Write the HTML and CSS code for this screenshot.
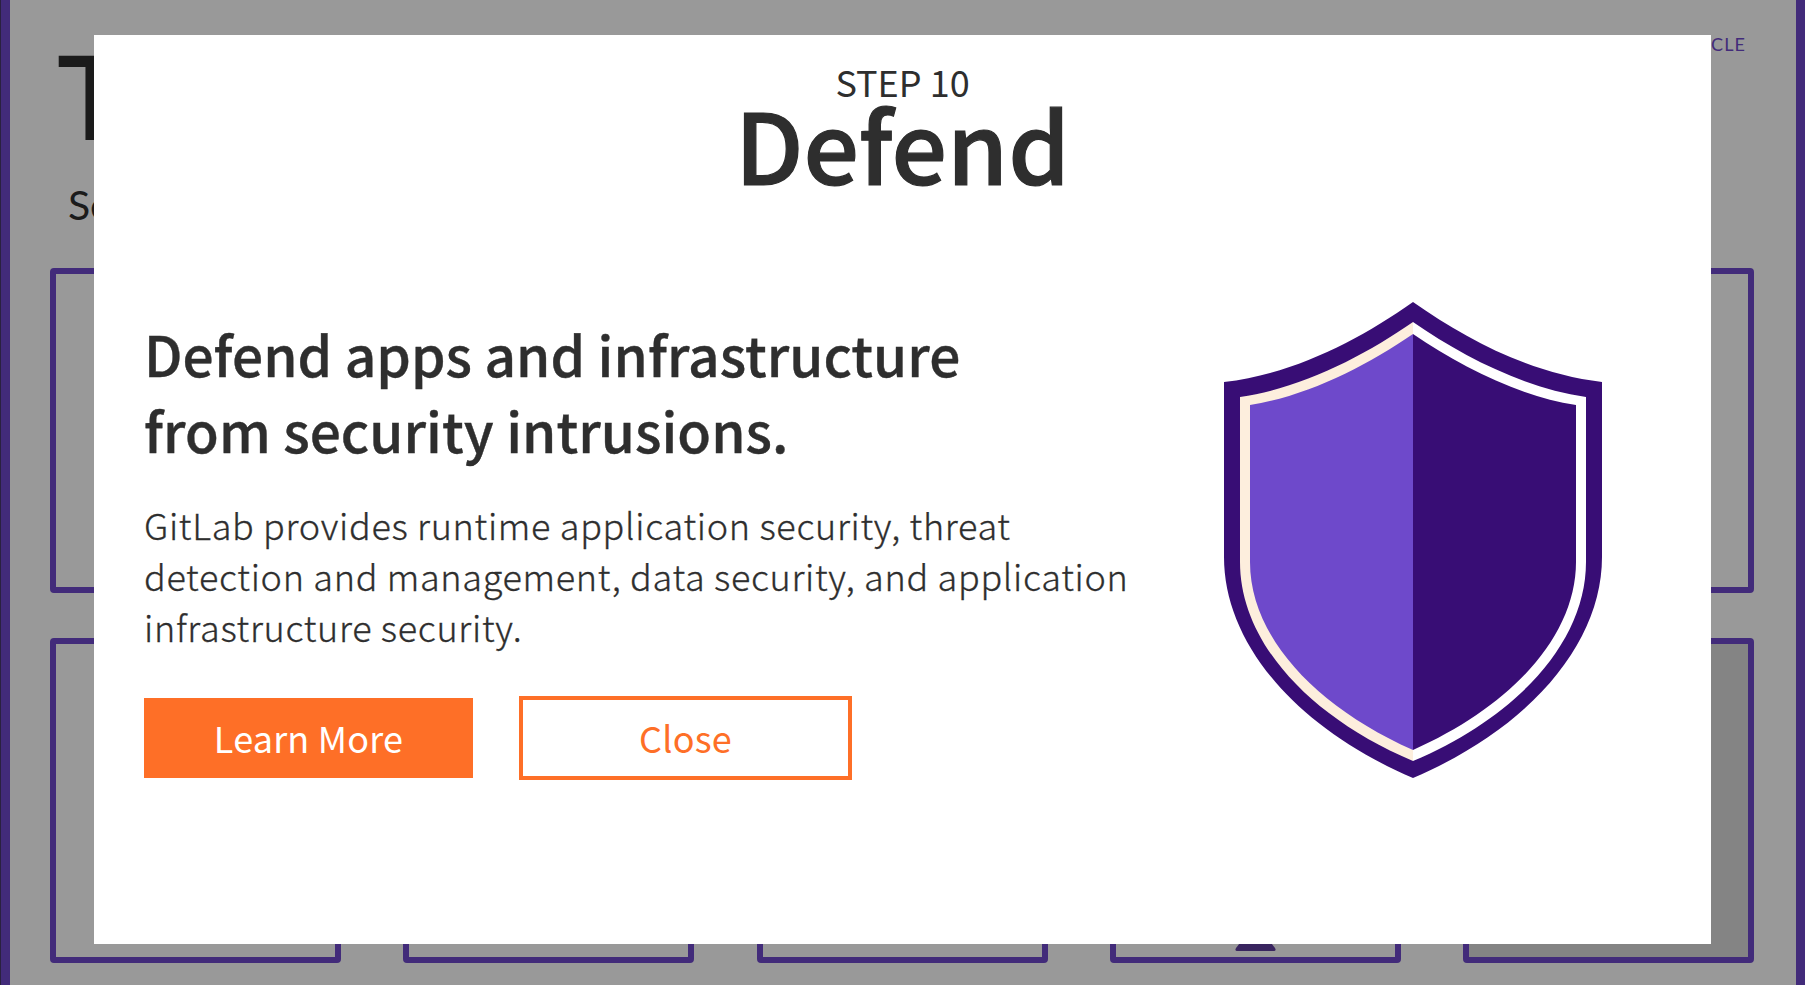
FILE: index.html
```html
<!DOCTYPE html>
<html lang="en">
<head>
	<meta charset="UTF-8">
	<meta name="viewport" content="width=device-width, initial-scale=1">
	<title>DevOps Lifecycle</title>
	<link rel="stylesheet" href="styles.css">
</head>
<body>
	<div class="page">
		<header class="page-top">
			<h1>The DevOps Lifecycle</h1>
			<a class="top-link" href="#">VIEW THE FULL LIFECYCLE</a>
		</header>
		<p class="page-sub">Select a step to learn more</p>

		<div class="steps">
			<div class="step"></div>
			<div class="step"></div>
			<div class="step"></div>
			<div class="step"></div>
			<div class="step"></div>
			<div class="step"></div>
			<div class="step"></div>
			<div class="step"></div>
			<div class="step">
				<svg class="step-icon" viewBox="0 0 41 28" width="41" height="28">
					<path d="M20.5 0L40 25q1.5 3-1 3H2q-2.500 0-1-3z"/>
				</svg>
			</div>
			<div class="step step-active"></div>
		</div>
	</div>

	<div class="overlay">
		<div class="modal">
			<div class="modal-head">
				<div class="step-no">STEP 10</div>
				<h2>Defend</h2>
			</div>

			<div class="modal-body">
				<div class="modal-text">
					<h3>Defend apps and infrastructure<br>from security intrusions.</h3>
					<p>GitLab provides runtime application security, threat detection and management, data security, and application infrastructure security.</p>
					<div class="buttons">
						<a class="btn btn-fill" href="#">Learn More</a>
						<a class="btn btn-line" href="#">Close</a>
					</div>
				</div>

				<svg class="shield" viewBox="0 0 378 476" width="378" height="476">
					<path fill="#380d75" d="M189 0C135 38 70 72 0 80V255C0 340 70 425 189 476C308 425 378 340 378 255V80C308 72 243 38 189 0z"/>
					<path fill="#fdeedd" d="M189 20C140 54 78 86 16 95V260C16 340 85 415 189 459z"/>
					<path fill="#fff" d="M189 20C238 54 300 86 362 95V260C362 340 293 415 189 459z"/>
					<path fill="#6e49cb" d="M189 32C142 64 84 94 26 103V260C26 335 92 405 189 448z"/>
					<path fill="#380d75" d="M189 32C236 64 294 94 352 103V260C352 335 286 405 189 448z"/>
				</svg>
			</div>
		</div>
	</div>
</body>
</html>
```

FILE: styles.css
```css
* {
	box-sizing: border-box;
	margin: 0;
	padding: 0;
}

html,
body {
	height: 100%;
	overflow: hidden;
}

body {
	font-family: "Lato", sans-serif;
	background: #fff;
	color: #2e2e2e;
	border-left: 1px solid #46376b;
}

.page {
	height: 100%;
	padding: 29px 42px 22px 40px;
	border-left: 9px solid #6e49cb;
	border-right: 9px solid #6e49cb;
	display: flex;
	flex-direction: column;
}

.page-top {
	display: flex;
	justify-content: space-between;
	align-items: flex-start;
	padding-left: 8px;
	white-space: nowrap;
}

h1 {
	font-size: 115px;
	font-weight: 400;
	line-height: 130px;
	-webkit-text-stroke: 2px #2e2e2e;
}

.top-link {
	font-size: 18px;
	line-height: 22px;
	letter-spacing: 1.1px;
	color: #6e49cb;
	text-decoration: none;
	margin-top: 4px;
	margin-right: 8px;
}

.page-sub {
	font-size: 41px;
	line-height: 50px;
	padding-left: 18px;
	margin-top: 21px;
}

.steps {
	flex: 1;
	display: grid;
	grid-template-columns: repeat(5, 291px);
	grid-template-rows: repeat(2, 325px);
	justify-content: space-between;
	row-gap: 45px;
	margin-top: 38px;
}

.step {
	border: 6px solid #6e49cb;
	border-radius: 4px;
	display: flex;
	flex-direction: column;
	justify-content: flex-end;
	align-items: center;
	padding-bottom: 6px;
}

.step-active {
	background: #dcdcdc;
}

.step-icon {
	fill: #603e9f;
}

.overlay {
	position: fixed;
	inset: 0;
	background: rgba(0,0,0,0.4);
	display: flex;
	padding: 35px 94px 41px;
}

.modal {
	flex: 1;
	background: #fff;
	font-family: "Noto Sans CJK SC", "Noto Sans", sans-serif;
	color: #2e2e2e;
	padding: 26px 109px 0 50px;
}

.modal-head {
	text-align: center;
	margin-left: 59px;
}

.step-no {
	font-size: 36px;
	line-height: 40px;
}

h2 {
	font-size: 98px;
	font-weight: 500;
	line-height: 82px;
	-webkit-text-stroke: 1.2px #2e2e2e;
}

.modal-body {
	display: flex;
	justify-content: space-between;
	align-items: flex-start;
	margin-top: 119px;
}

.modal-text {
	padding-top: 13px;
}

h3 {
	font-size: 55px;
	font-weight: 500;
	line-height: 76px;
	letter-spacing: 0.05px;
	-webkit-text-stroke: 0.4px #2e2e2e;
}

.modal-text p {
	font-size: 36px;
	font-weight: 300;
	line-height: 51px;
	letter-spacing: 0.68px;
	width: 1000px;
	margin-top: 32px;
	-webkit-text-stroke: 0.3px #2e2e2e;
}

.buttons {
	display: flex;
	gap: 46px;
	align-items: center;
	margin-top: 44px;
}

.btn {
	display: flex;
	justify-content: center;
	align-items: center;
	font-size: 36px;
	letter-spacing: 0.2px;
	text-decoration: none;
	padding-bottom: 3px;
}

.btn-fill {
	width: 329px;
	height: 80px;
	background: #fe6f27;
	color: #fff;
}

.btn-line {
	width: 333px;
	height: 84px;
	border: 4px solid #fe6f27;
	color: #fe6f27;
}

.shield {
	flex: none;
}
```
